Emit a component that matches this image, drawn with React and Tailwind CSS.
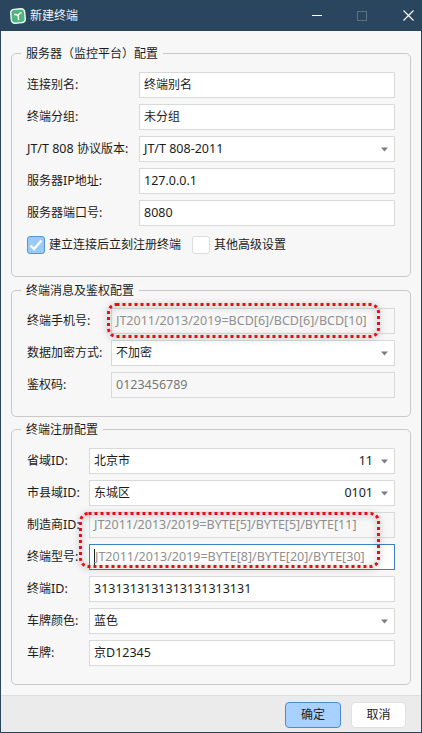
const font = { fontFamily: '"Noto Sans","Noto Sans CJK SC",sans-serif' };

function Txt({ children }) {
  const parts = String(children).split(/([\x00-\x7f]+)/).filter(Boolean);
  return parts.map((p, i) =>
    /^[\x00-\x7f]/.test(p) ? <span key={i} className="text-[12.5px]">{p}</span> : <span key={i}>{p}</span>
  );
}

function Arrow() {
  return (
    <svg width="7" height="5" viewBox="0 0 7 5" className="shrink-0">
      <path d="M0 0.5h7L3.5 4.5z" fill="#7d7d85" />
    </svg>
  );
}

function Field({ label, value, width, placeholder, disabled, focused, select, right }) {
  const border = focused ? "border-[#3f7fc4]" : "border-[#d9d9d9]";
  const bg = disabled ? "bg-[#f7f7f7]" : "bg-white";
  return (
    <div className="flex items-center h-[26px]">
      <div className="shrink-0 text-[#1c1c1c] whitespace-nowrap" style={{ width }}><Txt>{label}</Txt></div>
      <div className={`flex-1 min-w-0 h-[26px] border ${border} ${bg} flex items-center pl-[4px] pr-[6px] whitespace-nowrap overflow-hidden`}>
        {focused && <span className="w-px h-[17px] bg-[#222] shrink-0" />}
        {placeholder ? (
          <span className="text-[#8f8f8f] flex-1"><Txt>{placeholder}</Txt></span>
        ) : (
          <span className={`flex-1 ${disabled ? "text-[#777]" : "text-[#1c1c1c]"}`}><Txt>{value}</Txt></span>
        )}
        {right && <span className="text-[#1c1c1c] mr-[8px]"><Txt>{right}</Txt></span>}
        {select && <Arrow />}
      </div>
    </div>
  );
}

function Group({ title, className, children }) {
  return (
    <section className={`relative border border-[#c9c9c9] rounded-[5px] mx-[10px] pl-[15px] pr-[15px] ${className}`}>
      <h2 className="absolute -top-[9px] left-[9px] px-[5px] bg-[#f7f7f7] text-[#1c1c1c] text-[12px] leading-[18px] font-normal whitespace-nowrap">{title}</h2>
      {children}
    </section>
  );
}

function Mark({ className, w, h }) {
  return (
    <svg width={w} height={h} viewBox={`0 0 ${w} ${h}`} className={`absolute pointer-events-none drop-shadow-[0_1px_3px_rgba(0,0,0,0.45)] ${className}`}>
      <rect x="1.5" y="1.5" width={w - 3} height={h - 3} rx="8" fill="none" stroke="#ee0a14" strokeWidth="3" strokeDasharray="3 3" />
    </svg>
  );
}

export default function App() {
  return (
    <div className="relative w-[422px] h-[733px] bg-[#2a465e] px-px pb-px flex flex-col text-[12px] overflow-hidden" style={font}>
      <header className="h-[31px] shrink-0 flex items-center pl-[9px] text-white">
        <svg width="16" height="16" viewBox="0 0 16 16" className="shrink-0">
          <g transform="rotate(-5 8 8)">
            <rect x="1" y="1" width="14" height="14" rx="3.5" fill="#4fb57f" stroke="#eef7f1" strokeWidth="1.4" />
            <path d="M8.2 12.3V7.4M8.2 7.6C7 6.2 5.6 6.1 4.2 6.2M8.2 7.2C9.2 5.6 10.4 5 11.9 4.9" fill="none" stroke="#fff" strokeWidth="1.4" />
          </g>
        </svg>
        <span className="ml-[4px] text-[#f0f4f7]">新建终端</span>
        <div className="ml-auto flex items-center pr-[7px]">
          <span className="w-[10px] h-px bg-white mr-[35px]" />
          <span className="w-[10px] h-[10px] border border-[#587286] mr-[36px]" />
          <svg width="11" height="11" viewBox="0 0 11 11">
            <path d="M0.5 0.5l10 10M10.5 0.5l-10 10" stroke="#fff" strokeWidth="1.1" />
          </svg>
        </div>
      </header>

      <main className="flex-1 min-h-0 bg-[#f7f7f7] pt-[22px] flex flex-col">
        <Group title="服务器（监控平台）配置" className="h-[224px] pt-[18px] mb-[13px]">
          <div className="flex flex-col gap-[6px]">
            <Field width="112px" label="连接别名:" value="终端别名" />
            <Field width="112px" label="终端分组:" value="未分组" />
            <Field width="112px" label="JT/T 808 协议版本:" value="JT/T 808-2011" select />
            <Field width="112px" label="服务器IP地址:" value="127.0.0.1" />
            <Field width="112px" label="服务器端口号:" value="8080" />
          </div>
          <div className="flex items-center h-[19px] mt-[9px] text-[#1c1c1c]">
            <span className="w-[18px] h-[18px] rounded-[3px] bg-[#9ccaf8] border border-[#5b94d6] flex items-center justify-center">
              <svg width="14" height="12" viewBox="0 0 14 12"><path d="M1.5 6.5l3.5 3.5 7.5-8.5" fill="none" stroke="#fff" strokeWidth="2.4" /></svg>
            </span>
            <span className="ml-[4px]">建立连接后立刻注册终端</span>
            <span className="ml-[11px] w-[18px] h-[18px] rounded-[3px] bg-white border border-[#dcdcdc]" />
            <span className="ml-[4px]">其他高级设置</span>
          </div>
        </Group>

        <Group title="终端消息及鉴权配置" className="h-[127px] pt-[17px] mb-[12px]">
          <div className="flex flex-col gap-[6px]">
            <Field width="84px" label="终端手机号:" placeholder="JT2011/2013/2019=BCD[6]/BCD[6]/BCD[10]" disabled />
            <Field width="84px" label="数据加密方式:" value="不加密" select />
            <Field width="84px" label="鉴权码:" value="0123456789" disabled />
          </div>
        </Group>

        <Group title="终端注册配置" className="h-[256px] pt-[18px]">
          <div className="flex flex-col gap-[6px]">
            <Field width="62px" label="省域ID:" value="北京市" right="11" select />
            <Field width="62px" label="市县域ID:" value="东城区" right="0101" select />
            <Field width="62px" label="制造商ID:" placeholder="JT2011/2013/2019=BYTE[5]/BYTE[5]/BYTE[11]" disabled />
            <Field width="62px" label="终端型号:" placeholder="JT2011/2013/2019=BYTE[8]/BYTE[20]/BYTE[30]" focused />
            <Field width="62px" label="终端ID:" value="3131313131313131313131" />
            <Field width="62px" label="车牌颜色:" value="蓝色" select />
            <Field width="62px" label="车牌:" value="京D12345" />
          </div>
        </Group>
      </main>

      <footer className="h-[37px] shrink-0 bg-[#ebebeb] border-t border-[#dedede] flex items-center justify-end gap-[10px] pr-[15px] pt-[1px]">
        <button className="w-[56px] h-[26px] rounded-[4px] bg-[#a9d1ff] border border-[#4f8ad2] text-[#1c1c1c]">确定</button>
        <button className="w-[55px] h-[26px] rounded-[4px] bg-white border border-[#e0e0e0] text-[#1c1c1c]">取消</button>
      </footer>

      <Mark className="left-[107px] top-[303px]" w={273} h={35} />
      <Mark className="left-[79px] top-[512px]" w={301} h={56} />
    </div>
  );
}
